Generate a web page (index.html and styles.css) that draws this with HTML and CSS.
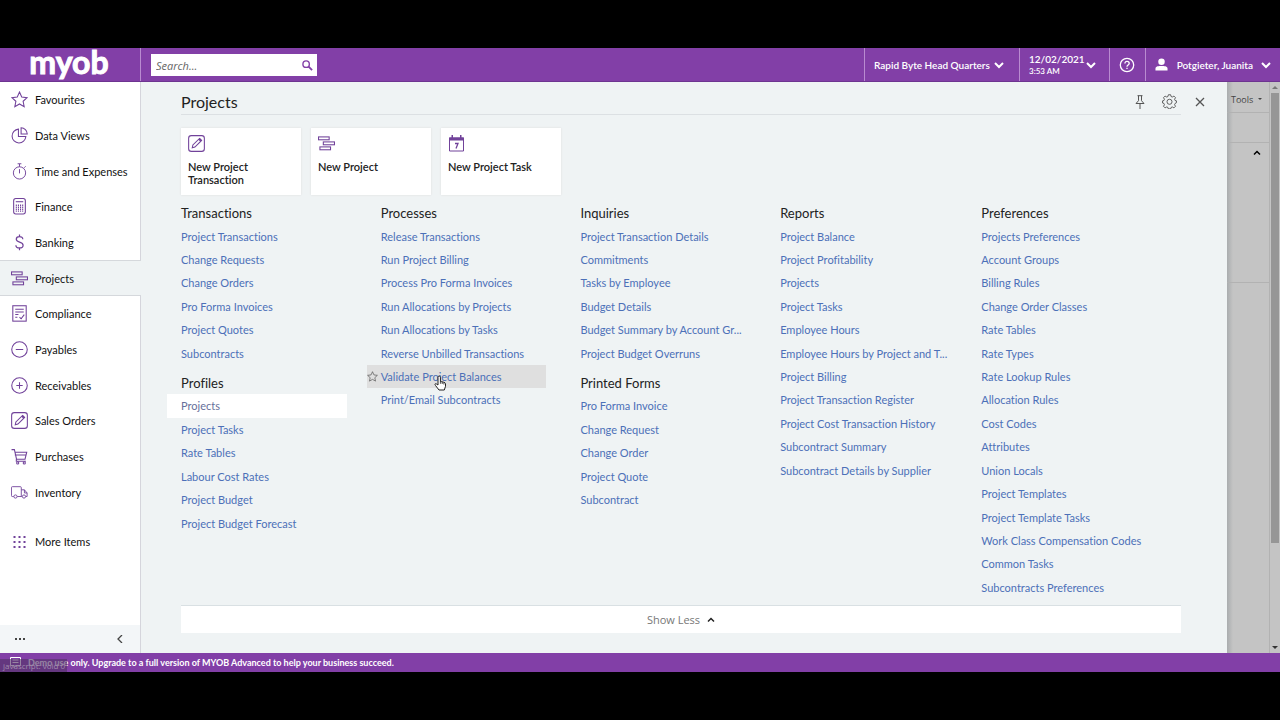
FILE: index.html
```html
<!DOCTYPE html>
<html lang="en">
<head>
<meta charset="utf-8">
<title>Projects</title>
<link rel="stylesheet" href="styles.css">
</head>
<body>
<svg class="sprite" aria-hidden="true">
  <symbol id="chevron" viewBox="0 0 10 10"><path d="M1 3l4 4 4-4" fill="none" stroke="currentColor" stroke-width="2"/></symbol>
  <symbol id="caret-up" viewBox="0 0 8 8"><path d="M1 5.5l3-3 3 3" fill="none" stroke="currentColor" stroke-width="1.5"/></symbol>
  <symbol id="star" viewBox="0 0 16 16"><path d="M8 1l2.1 4.7 5 .6-3.7 3.4 1 5L8 12.200l-4.400 2.500 1-5L.9 6.300l5-.6z" fill="none" stroke="currentColor"/></symbol>
  <symbol id="pie" viewBox="0 0 16 16"><g fill="none" stroke="currentColor"><path d="M7 2a6.500 6.500 0 1 0 7 7H7z"/><path d="M9.500.7v5.800h5.800A6 6 0 0 0 9.500.7z"/></g></symbol>
  <symbol id="watch" viewBox="0 0 16 18"><g fill="none" stroke="currentColor"><circle cx="8" cy="10.500" r="6.500"/><path d="M8 4V1M6 .8h4M8 6.500V11M13 5l1.500-1.500"/></g></symbol>
  <symbol id="calc" viewBox="0 0 14 16"><g fill="none" stroke="currentColor"><rect x="1.500" y=".5" width="11" height="14.500" rx="2"/><path d="M3.500 3.500h7"/><path d="M4 6v7M6 6v7M8 6v7M10 6v7" stroke-dasharray="1.500 .6"/></g></symbol>
  <symbol id="dollar" viewBox="0 0 10 18"><path d="M8.500 5.500C8.500 3.600 7 2.800 5 2.800S1.600 3.800 1.600 5.600C1.600 9.500 8.800 7.600 8.800 11.800c0 2-1.600 3-3.800 3s-3.800-1.100-3.800-3M5 .5v2.300M5 14.800v2.500" fill="none" stroke="currentColor" stroke-width="1.300"/></symbol>
  <symbol id="gantt" viewBox="0 0 16 14"><g fill="none" stroke="currentColor"><rect x=".5" y=".8" width="10" height="2.700"/><rect x="5" y="5.500" width="10.500" height="2.700"/><rect x="1.800" y="10.200" width="10" height="2.700"/></g></symbol>
  <symbol id="form" viewBox="0 0 14 16"><g fill="none" stroke="currentColor"><rect x=".7" y=".7" width="12.600" height="14.500"/><path d="M3 4h8M3 6.500h8M3 9h3M3 11.500h2M7 11.500l1.500 1.500 3-4"/></g></symbol>
  <symbol id="minus" viewBox="0 0 16 16"><g fill="none" stroke="currentColor"><circle cx="8" cy="8" r="7.300"/><path d="M4.500 8h7"/></g></symbol>
  <symbol id="plus" viewBox="0 0 16 16"><g fill="none" stroke="currentColor"><circle cx="8" cy="8" r="7.300"/><path d="M5 8h6M8 5v6"/></g></symbol>
  <symbol id="edit" viewBox="0 0 16 16"><g fill="none" stroke="currentColor"><rect x=".6" y=".6" width="14.800" height="14.800" rx="2.500"/><path d="M4 12l.6-2.600 6.300-6.200 1.900 1.900-6.300 6.200z"/><path d="M10.500 3.800l1.700 1.700" stroke-width="2"/></g></symbol>
  <symbol id="cart" viewBox="0 0 16 16"><g fill="none" stroke="currentColor"><path d="M.5 1.500h2.700l2 9h8l1.600-6.500H3.800M3.600 6.500h10.600M5 10.500v2h9"/><circle cx="6.300" cy="14" r="1"/><circle cx="12.500" cy="14" r="1"/></g></symbol>
  <symbol id="truck" viewBox="0 0 19 14"><g fill="none" stroke="currentColor"><path d="M3 11.500H1.500a1 1 0 0 1-1-1v-9a1 1 0 0 1 1-1h9a1 1 0 0 1 1 1v10H7M11.500 4h3.500l3 3.500v4h-1.500M11.500 11.500h1M15 4v3.500h3"/><circle cx="5" cy="11.500" r="1.800"/><circle cx="14.500" cy="11.500" r="1.800"/></g></symbol>
  <symbol id="dots" viewBox="0 0 12 12"><path d="M0 1h2M5 1h2M10 1h2M0 6h2M5 6h2M10 6h2M0 11h2M5 11h2M10 11h2" stroke="currentColor" stroke-width="2"/></symbol>
  <symbol id="calendar" viewBox="0 0 16 17"><path d="M1 3h14v13H1z" fill="none" stroke="currentColor"/><path d="M.5 2.500h15v3H.5zM3 0h1.500v3H3zM11.500 0H13v3h-1.500z" fill="currentColor"/><path d="M6.500 8.500h3l-2 5" fill="none" stroke="currentColor" stroke-width="1.300"/></symbol>
</svg>

<div class="app">
  <header class="topbar">
    <a class="logo" href="#">myob</a>
    <div class="search">
      <input class="search-input" type="search" aria-label="Search" placeholder="Search...">
      <button class="search-button" aria-label="Search"><svg viewBox="0 0 12 12"><circle cx="4.500" cy="4.500" r="3.500" fill="none" stroke="currentColor" stroke-width="1.500"/><path d="M7.200 7.200L11 11" stroke="currentColor" stroke-width="2"/></svg></button>
    </div>
    <button class="top-item branch">Rapid Byte Head Quarters <svg class="chev"><use href="#chevron"/></svg></button>
    <button class="top-item date"><span class="date-text"><span>12/02/2021</span><span class="time">3:53 AM</span></span><svg class="chev"><use href="#chevron"/></svg></button>
    <button class="top-item help" aria-label="Help"><svg viewBox="0 0 16 16"><g fill="none" stroke="currentColor" stroke-width="1.300"><circle cx="8" cy="8" r="6.700"/><path d="M5.900 6.500C5.900 5 6.800 4.400 8 4.400s2.200.8 2.200 2C10.200 8 8 8 8 9.700M8 10.700V12"/></g></svg></button>
    <button class="top-item user"><svg class="person" viewBox="0 0 14 14"><circle cx="7" cy="4" r="3.500" fill="currentColor"/><path d="M.5 13.500v-2C.5 8.500 4 8.500 7 8.500s6.500 0 6.500 3v2z" fill="currentColor"/></svg><span class="user-name">Potgieter, Juanita</span><svg class="chev"><use href="#chevron"/></svg></button>
  </header>

  <div class="workspace">
    <nav class="sidebar">
      <ul class="nav-list">
        <li><a class="nav-link" href="#"><svg><use href="#star"/></svg>Favourites</a></li>
        <li><a class="nav-link" href="#"><svg><use href="#pie"/></svg>Data Views</a></li>
        <li><a class="nav-link" href="#"><svg><use href="#watch"/></svg>Time and Expenses</a></li>
        <li><a class="nav-link" href="#"><svg><use href="#calc"/></svg>Finance</a></li>
        <li><a class="nav-link" href="#"><svg><use href="#dollar"/></svg>Banking</a></li>
        <li><a class="nav-link active" href="#"><svg><use href="#gantt"/></svg>Projects</a></li>
        <li><a class="nav-link" href="#"><svg><use href="#form"/></svg>Compliance</a></li>
        <li><a class="nav-link" href="#"><svg><use href="#minus"/></svg>Payables</a></li>
        <li><a class="nav-link" href="#"><svg><use href="#plus"/></svg>Receivables</a></li>
        <li><a class="nav-link" href="#"><svg><use href="#edit"/></svg>Sales Orders</a></li>
        <li><a class="nav-link" href="#"><svg><use href="#cart"/></svg>Purchases</a></li>
        <li><a class="nav-link" href="#"><svg><use href="#truck"/></svg>Inventory</a></li>
      </ul>
      <div class="nav-more">
        <a class="nav-link" href="#"><svg class="dots"><use href="#dots"/></svg>More Items</a>
      </div>
      <div class="nav-tools">
        <button aria-label="Options"><svg width="12" height="4" viewBox="0 0 12 4"><path d="M1 2h2M5 2h2M9 2h2" stroke="currentColor" stroke-width="2"/></svg></button>
        <button aria-label="Collapse"><svg width="6" height="8" viewBox="0 0 6 8"><path d="M5 0L1 4l4 4" fill="none" stroke="currentColor" stroke-width="1.300"/></svg></button>
      </div>
    </nav>

    <main class="panel">
      <div class="panel-head">
        <h1>Projects</h1>
        <button aria-label="Pin"><svg width="10" height="14" viewBox="0 0 10 14"><path d="M2.500.7h5M3.500.7v5L1 8.500h8L6.500 5.700v-5M5 8.500V14" fill="none" stroke="currentColor"/></svg></button>
        <button aria-label="Settings"><svg width="15" height="15" viewBox="0 0 16 16"><g fill="none" stroke="currentColor"><path d="M6.800.8h2.400l.5 1.900 1.300.5 1.700-1 1.700 1.700-1 1.700.5 1.300 1.500.4v2l-1.500.8-.5 1.300 1 1.700-1.700 1.700-1.700-1-1.300.5-.5 1.600H6.800l-.5-1.600-1.300-.5-1.700 1-1.700-1.700 1-1.700-.5-1.300-1.500-.5V7.300l1.500-.4.500-1.300-1-1.700 1.700-1.700 1.700 1 1.300-.5z"/><circle cx="8" cy="8.300" r="2.700"/></g></svg></button>
        <button class="close" aria-label="Close"><svg width="10" height="10" viewBox="0 0 10 10"><path d="M1 1l8 8M9 1L1 9" stroke="currentColor" stroke-width="1.300"/></svg></button>
      </div>

      <div class="cards">
        <a class="card" href="#"><svg><use href="#edit"/></svg>New Project Transaction</a>
        <a class="card" href="#"><svg><use href="#gantt"/></svg>New Project</a>
        <a class="card" href="#"><svg><use href="#calendar"/></svg>New Project Task</a>
      </div>

      <div class="columns">
        <div class="column">
          <section class="group span-7">
            <h2>Transactions</h2>
            <a href="#">Project Transactions</a>
            <a href="#">Change Requests</a>
            <a href="#">Change Orders</a>
            <a href="#">Pro Forma Invoices</a>
            <a href="#">Project Quotes</a>
            <a href="#">Subcontracts</a>
          </section>
          <section class="group span-7 lower">
            <h2>Profiles</h2>
            <a class="current" href="#">Projects</a>
            <a href="#">Project Tasks</a>
            <a href="#">Rate Tables</a>
            <a href="#">Labour Cost Rates</a>
            <a href="#">Project Budget</a>
            <a href="#">Project Budget Forecast</a>
          </section>
        </div>
        <div class="column">
          <section class="group span-9">
            <h2>Processes</h2>
            <a href="#">Release Transactions</a>
            <a href="#">Run Project Billing</a>
            <a href="#">Process Pro Forma Invoices</a>
            <a href="#">Run Allocations by Projects</a>
            <a href="#">Run Allocations by Tasks</a>
            <a href="#">Reverse Unbilled Transactions</a>
            <a class="hovered" href="#"><svg class="fav"><use href="#star"/></svg>Validate Project Balances<svg class="pointer" viewBox="0 0 12 16"><path d="M4 10V2.200a1.200 1.200 0 0 1 2.400 0V6.500l1.400.2 1.500.4 1.700.7c.4.200.5.600.5 1v2.500L10.300 15H5L1.500 10.500C.3 9 1.500 8.200 2.500 9z" fill="#fff" stroke="#222"/><path d="M6.400 6.500v2.300M8.200 7v2M9.900 7.500v2" stroke="#222" stroke-width=".8"/></svg></a>
            <a href="#">Print/Email Subcontracts</a>
          </section>
        </div>
        <div class="column">
          <section class="group span-7">
            <h2>Inquiries</h2>
            <a href="#">Project Transaction Details</a>
            <a href="#">Commitments</a>
            <a href="#">Tasks by Employee</a>
            <a href="#">Budget Details</a>
            <a href="#">Budget Summary by Account Gr...</a>
            <a href="#">Project Budget Overruns</a>
          </section>
          <section class="group span-6 lower">
            <h2>Printed Forms</h2>
            <a href="#">Pro Forma Invoice</a>
            <a href="#">Change Request</a>
            <a href="#">Change Order</a>
            <a href="#">Project Quote</a>
            <a href="#">Subcontract</a>
          </section>
        </div>
        <div class="column">
          <section class="group span-12">
            <h2>Reports</h2>
            <a href="#">Project Balance</a>
            <a href="#">Project Profitability</a>
            <a href="#">Projects</a>
            <a href="#">Project Tasks</a>
            <a href="#">Employee Hours</a>
            <a href="#">Employee Hours by Project and T...</a>
            <a href="#">Project Billing</a>
            <a href="#">Project Transaction Register</a>
            <a href="#">Project Cost Transaction History</a>
            <a href="#">Subcontract Summary</a>
            <a href="#">Subcontract Details by Supplier</a>
          </section>
        </div>
        <div class="column">
          <section class="group span-17">
            <h2>Preferences</h2>
            <a href="#">Projects Preferences</a>
            <a href="#">Account Groups</a>
            <a href="#">Billing Rules</a>
            <a href="#">Change Order Classes</a>
            <a href="#">Rate Tables</a>
            <a href="#">Rate Types</a>
            <a href="#">Rate Lookup Rules</a>
            <a href="#">Allocation Rules</a>
            <a href="#">Cost Codes</a>
            <a href="#">Attributes</a>
            <a href="#">Union Locals</a>
            <a href="#">Project Templates</a>
            <a href="#">Project Template Tasks</a>
            <a href="#">Work Class Compensation Codes</a>
            <a href="#">Common Tasks</a>
            <a href="#">Subcontracts Preferences</a>
          </section>
        </div>
      </div>

      <button class="show-less">Show Less <svg><use href="#caret-up"/></svg></button>
    </main>

    <aside class="behind">
      <div class="behind-page">
        <button class="tools">Tools <span class="down"></span></button>
        <div class="behind-bar"></div>
        <div class="behind-form"><svg><use href="#caret-up"/></svg></div>
      </div>
      <div class="scrollbar"><span class="arrow up"></span><span class="thumb"></span><span class="arrow"></span></div>
    </aside>
  </div>

  <footer class="notice">
    <svg viewBox="0 0 11 11"><path d="M.5.5h10v8H6l-2 2v-2H.5zM2.500 3h6M2.500 5.500h6" fill="none" stroke="currentColor"/></svg>
    <span>Demo use only. Upgrade to a full version of MYOB Advanced to help your business succeed.</span>
    <span class="status">javascript: void 0</span>
  </footer>
</div>
</body>
</html>
```

FILE: styles.css
```css
* { box-sizing: border-box; }

body {
  margin: 0;
  padding: 48px 0;
  min-height: 100vh;
  display: flex;
  background: #000;
  color: #111;
  font-family: Lato, "Noto Sans", sans-serif;
  font-size: 11px;
  font-variant-ligatures: none;
}

a { color: inherit; text-decoration: none; }
button {
  border: 0;
  padding: 0;
  background: none;
  color: inherit;
  font: inherit;
  cursor: pointer;
}
h1, h2, ul { margin: 0; padding: 0; font-weight: 400; }
ul { list-style: none; }
svg { display: block; flex: none; }
.sprite { position: absolute; width: 0; height: 0; }

.app { flex: 1; min-width: 0; display: flex; flex-direction: column; }

/* Top bar */
.topbar {
  display: flex;
  height: 34px;
  background: #823fa7;
  border-bottom: 1px solid #6d3490;
  color: #fff;
}
.logo {
  width: 141px;
  border-right: 1px solid #b98bd0;
  padding-right: 2px;
  text-align: center;
  font-size: 32px;
  font-weight: 700;
  line-height: 28px;
  -webkit-text-stroke: 1px #fff;
}
.search {
  display: flex;
  align-items: center;
  width: 166px;
  height: 22px;
  margin: 6px auto 0 10px;
  background: #fff;
  color: #823fa7;
}
.search-input {
  flex: 1;
  min-width: 0;
  border: 0;
  padding: 0 5px;
  background: none;
  font: italic 11px "Open Sans", sans-serif;
  outline: 0;
}
.search-input::placeholder { color: #666; }
.search-button { padding: 0 4px; }
.search-button svg { width: 11px; height: 11px; }
.top-item {
  display: flex;
  align-items: center;
  justify-content: space-between;
  padding: 0 9px;
  border-left: 1px solid #b98bd0;
  font-size: 10px;
  font-weight: 600;
  white-space: nowrap;
}
.chev { width: 10px; height: 10px; }
.branch { width: 155px; padding-right: 15px; }
.date { width: 90px; padding-right: 13px; }
.date-text { display: flex; flex-direction: column; text-align: left; line-height: 12px; }
.time { font-size: 8px; }
.help { width: 36px; }
.help svg { width: 16px; height: 16px; }
.user { width: 135px; }
.user-name { margin-left: auto; padding-right: 8px; }
.person { width: 13px; height: 13px; }

/* Sidebar */
.workspace { flex: 1; display: flex; background: #eff3f4; }
.sidebar {
  display: flex;
  flex-direction: column;
  width: 141px;
  background: #fff;
}
.nav-list {
  flex: 1;
  display: grid;
  grid-auto-rows: 1fr;
}
.nav-link {
  display: flex;
  align-items: center;
  gap: 7px;
  height: 100%;
  padding-left: 11px;
  border-right: 1px solid #d5d5dc;
}
.nav-link svg { width: 17px; height: 17px; color: #71429a; }
.nav-link.active {
  background: #eff3f4;
  border: solid #d5d8dc;
  border-width: 1px 0;
}
.nav-link .dots { height: 12px; }
.nav-more {
  height: 115px;
  padding: 14px 0 66px;
  border-right: 1px solid #d5d5dc;
}
.nav-more .nav-link { border: 0; }
.nav-tools {
  display: flex;
  align-items: center;
  justify-content: space-between;
  height: 28px;
  padding: 0 17px 0 14px;
  background: #f3f6f8;
  border-right: 1px solid #d5d5dc;
  color: #444;
}

/* Menu panel */
.panel {
  flex: 1;
  min-width: 0;
  display: flex;
  flex-direction: column;
  padding: 0 46px 20px 40px;
}
.panel-head {
  display: flex;
  align-items: center;
  height: 33px;
  padding-top: 7px;
  border-bottom: 1px solid #dce0e3;
  color: #555;
}
.panel-head h1 { flex: 1; color: #222; font-size: 16px; }
.panel-head button { margin-left: 17px; }
.panel-head .close { margin: 0 -24px 0 18px; }
.cards { display: flex; gap: 10px; margin-top: 13px; }
.card {
  width: 120px;
  height: 67px;
  padding: 7px;
  background: #fff;
  box-shadow: 0 0 2px #ddd;
  color: #222;
  font-weight: 600;
  line-height: 13px;
}
.card svg { width: 17px; height: 17px; margin-bottom: 8px; color: #71429a; }

.columns {
  flex: 1;
  display: grid;
  grid-template-columns: repeat(5, 1fr);
  margin: 6px 0;
}
.column { display: grid; grid-template-rows: repeat(17, 1fr); }
.group { display: grid; grid-auto-rows: 1fr; color: #4c70b8; }
.group h2 { align-self: center; color: #222; font-size: 13px; }
.group a {
  display: flex;
  align-items: center;
  margin: 0 34px 0 -14px;
  padding-left: 14px;
  min-height: 0;
  white-space: nowrap;
}
.group .current { background: #fff; color: #66709a; }
.group .hovered { position: relative; background: #dfdfdf; }
.fav { position: absolute; left: 0; width: 11px; height: 11px; color: #555; }
.pointer { position: absolute; left: 67px; top: 10px; width: 12px; height: 16px; }
.lower { margin: 6px 0 -6px; }
.span-6 { grid-row: span 6; }
.span-7 { grid-row: span 7; }
.span-9 { grid-row: span 9; }
.span-12 { grid-row: span 12; }
.span-17 { grid-row: span 17; }

.show-less {
  display: flex;
  align-items: center;
  justify-content: center;
  gap: 7px;
  height: 28px;
  background: #fff;
  border-top: 1px solid #d9e0e3;
  color: #777;
  font: 11px "Open Sans", sans-serif;
}
.show-less svg { width: 8px; height: 8px; color: #222; }

/* Dimmed page beside the panel */
.behind {
  display: flex;
  width: 53px;
  background: linear-gradient(90deg, #a9acae, #c4c4c4 6px);
}
.behind-page { flex: 1; color: #444; }
.tools {
  display: flex;
  align-items: center;
  gap: 5px;
  width: 100%;
  height: 31px;
  padding: 4px 0 0 4px;
  border-bottom: 1px solid #b2b2b2;
  font: 9px "Open Sans", sans-serif;
}
.down { border: 2px solid transparent; border-top-color: #444; border-bottom: 0; }
.behind-bar { height: 30px; border-bottom: 1px solid #b2b2b2; }
.behind-form {
  display: flex;
  justify-content: flex-end;
  height: 140px;
  padding: 6px 8px;
  border-bottom: 1px solid #b2b2b2;
}
.behind-form svg { width: 8px; height: 8px; color: #000; }
.scrollbar {
  display: flex;
  flex-direction: column;
  align-items: center;
  width: 11px;
  padding: 4px 0;
  border-left: 1px solid #b2b2b2;
}
.arrow { border: 3px solid transparent; border-top-color: #333; border-bottom: 0; margin-top: auto; }
.arrow.up { margin: 0 0 4px; border-top: 0; border-bottom: 3px solid #777; }
.thumb { width: 8px; height: 80%; background: #969696; }

/* Notice bar */
.notice {
  position: relative;
  display: flex;
  align-items: center;
  gap: 7px;
  height: 19px;
  padding-left: 10px;
  background: #823fa7;
  color: #fff;
  font-size: 9px;
  font-weight: 700;
}
.notice svg { width: 11px; height: 11px; }
.status {
  position: absolute;
  left: 0;
  bottom: 0;
  width: 67px;
  height: 13px;
  padding-left: 3px;
  overflow: hidden;
  white-space: nowrap;
  background: rgba(80, 50, 100, .6);
  color: #a18bae;
  font: 8px/13px "Open Sans", sans-serif;
}
```
